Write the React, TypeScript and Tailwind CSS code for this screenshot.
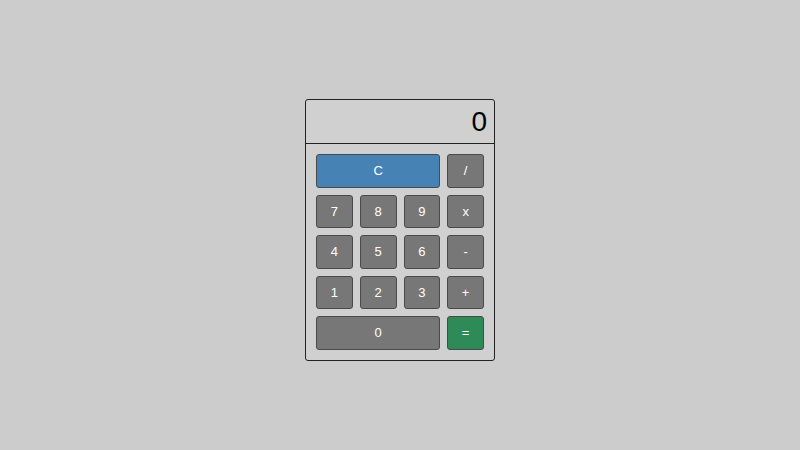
const keys: { label: string; wide?: boolean; tone?: 'blue' | 'green' }[] = [
  { label: 'C', wide: true, tone: 'blue' },
  { label: '/' },
  { label: '7' },
  { label: '8' },
  { label: '9' },
  { label: 'x' },
  { label: '4' },
  { label: '5' },
  { label: '6' },
  { label: '-' },
  { label: '1' },
  { label: '2' },
  { label: '3' },
  { label: '+' },
  { label: '0', wide: true },
  { label: '=', tone: 'green' },
];

export default function App() {
  return (
    <div className="min-h-[450px] w-full bg-[#cccccc] flex justify-center pt-[99px] font-['Liberation_Sans',Arial,sans-serif]">
      <div className="w-[190px] h-[262px] self-start border border-[#222] rounded-[3px] bg-[#d0d0d0] flex flex-col">
        <div className="h-[44px] border-b border-[#222] flex items-center justify-end pr-[7px] text-[28px] text-black">
          0
        </div>
        <div className="grid grid-cols-4 gap-x-[7px] gap-y-[7px] px-[10px] pt-[10px] auto-rows-[33.5px]">
          {keys.map((k) => (
            <button
              key={k.label}
              className={`rounded-[3px] border border-[#4a4a4a] text-white text-[13px] flex items-center justify-center ${
                k.wide ? 'col-span-3' : ''
              } ${k.tone === 'blue' ? 'bg-[#4682b4]' : k.tone === 'green' ? 'bg-[#2e8b57]' : 'bg-[#777777]'}`}
            >
              {k.label}
            </button>
          ))}
        </div>
      </div>
    </div>
  );
}
